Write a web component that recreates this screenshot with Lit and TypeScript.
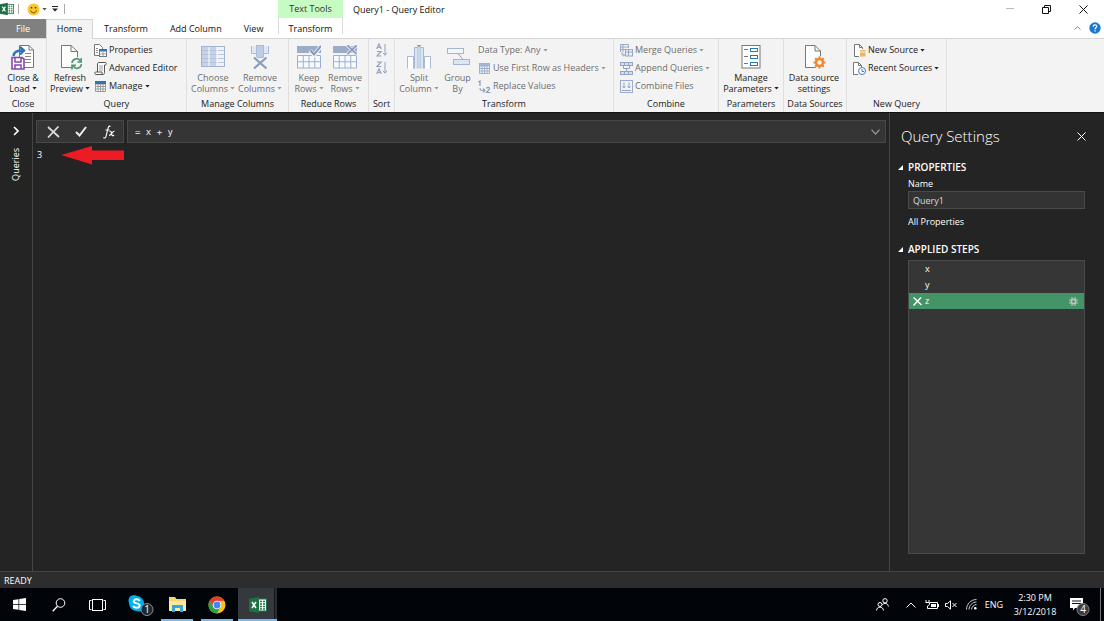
import { LitElement, html, svg, css, TemplateResult } from "lit";
import { customElement, state } from "lit/decorators.js";
import { classMap } from "lit/directives/class-map.js";

const icon = (w: number, h: number, body: unknown) =>
  html`<svg class="ico" width=${w} height=${h} viewBox="0 0 ${w} ${h}" fill="none" aria-hidden="true">${body}</svg>`;

const caret = html`<svg class="caret" width="5" height="3" viewBox="0 0 5 3" aria-hidden="true"><path d="M.3 0H4.700L2.500 2.600Z" fill="currentColor"/></svg>`;

const excel = (w: number, h: number) => html`<svg width=${w} height=${h} viewBox="0 0 18 16" aria-hidden="true">
  <rect x="9" y="2" width="8.500" height="12" fill="#fff" stroke="#1e7145" stroke-width="1"/>
  <path d="M11 4.500h2M14 4.500h2M11 7h2M14 7h2M11 9.500h2M14 9.500h2M11 12h2M14 12h2" stroke="#1e7145" stroke-width="1.300"/>
  <path d="M0 1.800L10 0V16L0 14.200Z" fill="#1e7145"/>
  <path d="M3 5L7 11M7 5L3 11" stroke="#fff" stroke-width="1.500"/></svg>`;

const grid = (x: number, y: number, w: number, h: number, cols: number, rows: number, stroke: string) => {
  let d = `M${x} ${y}h${w}v${h}h${-w}z`;
  for (let i = 1; i < cols; i++) d += `M${x + (w * i) / cols} ${y}v${h}`;
  for (let i = 1; i < rows; i++) d += `M${x} ${y + (h * i) / rows}h${w}`;
  return svg`<path d=${d} stroke=${stroke}/>`;
};

const I = {
  closeLoad: icon(24, 26, svg`
    <path d="M8.500 1.500H18L22.500 6V23.500H8.500Z" fill="#fff" stroke="#777"/><path d="M18 1.500V6H22.500" stroke="#777"/>
    <path d="M14 9.500h6M14 12.500h6M14 15.500h6M14 18.500h6" stroke="#888"/>
    <path d="M2.500 12C3 7.500 6 6.500 12 6.500M9 3L13 6.500L9 10.500" stroke="#2f74b5" stroke-width="2.400"/>
    <path d="M1 13.500H11L13 15V25H1Z" fill="#fff" stroke="#8646ad" stroke-width="1.600"/>
    <path d="M4 14v4h6v-4M4 25v-4h6v4" stroke="#8646ad" stroke-width="1.500"/>`),
  refresh: icon(24, 26, svg`
    <path d="M3.500 1.500H13L19.500 7.500V23.500H3.500Z" fill="#fff" stroke="#777"/><path d="M13 1.500V7.500H19.500" stroke="#777"/>
    <circle cx="19" cy="19.500" r="6.500" fill="#f3f3f3"/>
    <path d="M14 19C14.500 14.500 20 13 22.500 17M23.300 14V18H19.500" stroke="#4f9c77" stroke-width="1.700"/>
    <path d="M23.500 20C23 25 17.500 25.500 15 22M14 25.500V21.300H18" stroke="#4f9c77" stroke-width="1.700"/>`),
  choose: icon(24, 24, svg`
    <rect x="1" y="1" width="22" height="21" fill="#eef3fa"/><rect x="1" y="1" width="15" height="21" fill="#c5d3e8"/>
    <path d="M1 5.500H23M1 9.500H23M1 13.500H23M1 17.500H23" stroke="#aebdd6" stroke-width=".8"/>
    <path d="M8 1v21M16 1v21" stroke="#fff"/><rect x="0.500" y="1.500" width="23" height="20" stroke="#a3b3ce"/>`),
  removeCols: icon(24, 26, svg`
    <path d="M3.500 2V9.500H8M20.500 2V9.500H16" stroke="#a9bbd6"/><rect x="4" y="2" width="4" height="7" fill="#dfe8f4"/><rect x="16" y="2" width="4" height="7" fill="#dfe8f4"/>
    <rect x="8.500" y="1.500" width="7" height="12" fill="#bdcde4" stroke="#a9bbd6"/>
    <path d="M6 13.500L18.500 24.500M18.500 13.500L6 24.500" stroke="#f3f3f3" stroke-width="4"/>
    <path d="M6 13.500L18.500 24.500M18.500 13.500L6 24.500" stroke="#8a9bbb" stroke-width="2.200"/>`),
  keep: icon(24, 24, svg`
    <rect y="1" width="24" height="7" fill="#9bacc9"/><rect x="1" y="11" width="22" height="12" fill="#f7faff"/>${grid(0.500, 10.500, 23, 12.500, 4, 2, "#9bb0d0")}
    <path d="M13 5.500L17 10L24 1" stroke="#f3f3f3" stroke-width="4"/><path d="M13.500 5.500L17 9.500L24 1" stroke="#8798b8" stroke-width="2"/>`),
  removeRows: icon(24, 24, svg`
    <rect y="1" width="24" height="7" fill="#9bacc9"/><rect x="1" y="11" width="22" height="12" fill="#f7faff"/>${grid(0.500, 10.500, 23, 12.500, 4, 2, "#9bb0d0")}
    <path d="M14 0L24 9.500M24 0L14 9.500" stroke="#dfe5ef" stroke-width="3.500"/><path d="M14.500 .5L23.500 9M23.500 .5L14.500 9" stroke="#8798b8" stroke-width="1.700"/>`),
  az: icon(12, 14, svg`<path d="M.7 6L3 1L5.300 6M1.500 4.500H4.500M1 8.500H5L1 13H5.200" stroke="#93a3c0" stroke-width="1.200"/><path d="M9 1V12M7 9.800L9 12.300L11 9.800" stroke="#93a3c0"/>`),
  za: icon(12, 14, svg`<path d="M.7 13L3 8L5.300 13M1.500 11.500H4.500M1 1H5L1 5.500H5.200" stroke="#93a3c0" stroke-width="1.200"/><path d="M9 1V12M7 9.800L9 12.300L11 9.800" stroke="#93a3c0"/>`),
  split: icon(24, 26, svg`
    <path d="M.5 24.500V12.500H6.500V24.500M17.500 24.500V12.500H23.500V24.500" fill="#fff" stroke="#a6b9d6"/>
    <path d="M7.500 24.500V3.500H11V24.500M13 24.500V3.500H16.500V24.500" fill="#d9e4f3" stroke="#a6b9d6"/><path d="M9.500 1H14.500L12 3.500Z" fill="#8a9bbb"/>`),
  group: icon(24, 26, svg`
    <rect x="1.500" y="4.500" width="16" height="5" fill="#f4f8fd" stroke="#a3b5d1"/><rect x="7.500" y="15.500" width="16" height="5" fill="#dbe6f5" stroke="#a3b5d1"/><path d="M12 9.500L17 15.500" stroke="#93a3c0"/>`),
  props: icon(13, 13, svg`
    <path d="M.5 .5H5.500L8.500 3.500V11.500H.5Z" fill="#fff" stroke="#777"/><path d="M2 4.500h2M2 6.500h2M2 8.500h2" stroke="#888"/>
    <rect x="5.500" y="5.500" width="7" height="7" fill="#fff" stroke="#777"/><rect x="5" y="5" width="8" height="2.500" fill="#2e75b6"/><path d="M6 10h6.500M9 7.500v5" stroke="#888" stroke-width=".8"/>`),
  editor: icon(13, 13, svg`
    <path d="M3.500 10V2C3.500 1 4 .5 5 .5H11.500C12.500 .5 12.500 3 11.500 3H10.500V10.500C10.500 12 10 12.500 9 12.500H2C.5 12.500 .5 10 1.500 10H8C8 11.500 8.500 12.500 9 12.500" fill="#fff" stroke="#555"/><path d="M5 4h4M5 6h4M5 8h4" stroke="#888" stroke-width=".8"/>`),
  manage: icon(13, 13, svg`<rect x="1" y="2" width="11" height="9" fill="#fff"/>${grid(1.500, 1.500, 10, 10, 4, 4, "#999")}<rect x="1" y="1" width="11" height="3" fill="#2e75b6"/>`),
  header: icon(13, 13, svg`<rect x="1" y="1" width="11" height="3" fill="#a9b9d4"/>${grid(1.500, 1.500, 10, 10, 4, 4, "#a0b1cd")}`),
  replace: icon(13, 13, svg`<path d="M.5 2L2 1V6M8.500 8.500C9 7 12 7 11.500 9L8.500 12.500H12.500" stroke="#8a9bbb" stroke-width="1.200"/><path d="M2 8C2 10.500 3 10.500 7 10.500M5 8.500L7 10.500L5 12.500" stroke="#93a3c0" stroke-width="1.200"/>`),
  merge: icon(13, 13, svg`<path d="M.5 8V.5H8.500V4M.5 3H8M3 .5V8M.5 5.500H5" stroke="#98a9c5"/><rect x="5.500" y="5.500" width="7" height="6.500" fill="#e7eef8" stroke="#98a9c5"/><path d="M5.500 8H12.500M8.500 5.500V12M2 8V11H4.500M3 9.500L4.500 11L3 12.500" stroke="#98a9c5"/>`),
  append: icon(13, 13, svg`<rect x=".5" y=".5" width="12" height="3" fill="#d3dfef" stroke="#93a5c3"/><path d="M4.500 .5V3.500M8.500 .5V3.500M3.500 3.500V6.500H9.500V3.500M6.500 6V9.500" stroke="#93a5c3"/><rect x=".5" y="9.500" width="12" height="3" fill="#d3dfef" stroke="#93a5c3"/><path d="M4.500 9V12.500M8.500 9V12.500" stroke="#93a5c3"/>`),
  combine: icon(13, 13, svg`<rect x=".5" y=".5" width="12" height="12" fill="#eef3fa" stroke="#9bacc9"/><path d="M4 2.500V8M2.500 6.500L4 8L5.500 6.500M9 2.500V8M7.500 6.500L9 8L10.500 6.500M2 10.500H11" stroke="#93a3c0"/>`),
  params: icon(20, 24, svg`<rect x="1" y=".5" width="18" height="22.500" fill="#fff" stroke="#777"/><path d="M3 4.500h4M3 11.500h4M3 18.500h4" stroke="#777"/><rect x="9.500" y="3.500" width="7" height="3" stroke="#2e75b6"/><rect x="9.500" y="10.500" width="7" height="3" stroke="#2e75b6"/><rect x="9.500" y="17.500" width="7" height="3" stroke="#2e75b6"/>`),
  source: icon(24, 26, svg`
    <path d="M3.500 1.500H13L18.500 7V23.500H3.500Z" fill="#fff" stroke="#777"/><path d="M13 1.500V7H18.500" stroke="#777"/>
    <circle cx="17.500" cy="18.500" r="6.500" fill="#f3f3f3"/><circle cx="17.500" cy="18.500" r="3.500" stroke="#ed8733" stroke-width="2.400"/>
    <path d="M17.500 12.500v3M17.500 21.500v3M11.500 18.500h3M20.500 18.500h3M13.200 14.200l2 2M19.800 20.800l2 2M13.200 22.800l2-2M19.800 16.200l2-2" stroke="#ed8733" stroke-width="2"/>`),
  newSource: icon(13, 13, svg`<path d="M6 12.500H1.500V.5H6.500L9.500 3.500V5" fill="#fff" stroke="#777"/><path d="M6.500 .5V3.500H9.500" stroke="#777"/><path d="M7 6h5.500v6.500H7z" fill="#ecb765"/><path d="M7 8H12.500" stroke="#fff" stroke-width=".8"/>`),
  recent: icon(13, 13, svg`<path d="M5 12.500H.5V.5H5.500L8.500 3.500V5" fill="#fff" stroke="#777"/><path d="M5.500 .5V3.500H8.500" stroke="#777"/><circle cx="9" cy="9" r="3.500" fill="#fff" stroke="#3f7fc1"/><path d="M9 7V9.500H11" stroke="#3f7fc1"/>`),
};

interface Cmd { label: string; icon?: TemplateResult; menu?: boolean; off?: boolean; name?: string; }
interface Group { name: string; key: string; big: Cmd[]; small: Cmd[]; }

const GROUPS: Group[] = [
  { name: "Close", key: "g-close", big: [{ label: "Close &\nLoad", icon: I.closeLoad, menu: true }], small: [] },
  { name: "Query", key: "g-query", big: [{ label: "Refresh\nPreview", icon: I.refresh, menu: true }],
    small: [{ label: "Properties", icon: I.props }, { label: "Advanced Editor", icon: I.editor }, { label: "Manage", icon: I.manage, menu: true }] },
  { name: "Manage Columns", key: "g-cols", big: [{ label: "Choose\nColumns", icon: I.choose, menu: true, off: true }, { label: "Remove\nColumns", icon: I.removeCols, menu: true, off: true }], small: [] },
  { name: "Reduce Rows", key: "g-rows", big: [{ label: "Keep\nRows", icon: I.keep, menu: true, off: true }, { label: "Remove\nRows", icon: I.removeRows, menu: true, off: true }], small: [] },
  { name: "Sort", key: "g-sort", big: [], small: [{ label: "", name: "Sort Ascending", icon: I.az, off: true }, { label: "", name: "Sort Descending", icon: I.za, off: true }] },
  { name: "Transform", key: "g-transform", big: [{ label: "Split\nColumn", icon: I.split, menu: true, off: true }, { label: "Group\nBy", icon: I.group, off: true }],
    small: [{ label: "Data Type: Any", menu: true, off: true }, { label: "Use First Row as Headers", icon: I.header, menu: true, off: true }, { label: "Replace Values", icon: I.replace, off: true }] },
  { name: "Combine", key: "g-combine", big: [], small: [{ label: "Merge Queries", icon: I.merge, menu: true, off: true }, { label: "Append Queries", icon: I.append, menu: true, off: true }, { label: "Combine Files", icon: I.combine, off: true }] },
  { name: "Parameters", key: "g-params", big: [{ label: "Manage\nParameters", icon: I.params, menu: true }], small: [] },
  { name: "Data Sources", key: "g-sources", big: [{ label: "Data source\nsettings", icon: I.source }], small: [] },
  { name: "New Query", key: "g-new", big: [], small: [{ label: "New Source", icon: I.newSource, menu: true }, { label: "Recent Sources", icon: I.recent, menu: true }] },
];

const base = css`
  * { box-sizing: border-box; }
  button, input { font: inherit; color: inherit; background: none; border: 0; padding: 0; margin: 0; border-radius: 0; }
  button { display: flex; align-items: center; justify-content: center; }
  svg { display: block; flex: none; }
`;

@customElement("editor-ribbon")
export class EditorRibbon extends LitElement {
  static styles = [base, css`
    :host { display: flex; background: #f3f3f3; border-top: 1px solid #d5d5d5; height: 74px; color: #222; }
    .group { display: flex; flex-direction: column; border-right: 1px solid #dfdfdf; padding-top: 2px; flex: none; }
    .tools { display: flex; height: 54px; }
    .name { text-align: center; line-height: 18px; height: 17px; white-space: nowrap; }
    .big { flex-direction: column; justify-content: flex-start; padding-top: 3px; gap: 2px; width: 46px; line-height: 11px; white-space: nowrap; }
    .big .pic { height: 26px; display: flex; align-items: center; }
    .line { display: flex; align-items: center; justify-content: center; gap: 2px; }
    .list { display: flex; flex-direction: column; }
    .small { height: 18px; gap: 2px; justify-content: flex-start; white-space: nowrap; }
    .off { color: #6e6e6e; }
    .off .caret { color: #999; }
    .g-close { width: 47px; }
    .g-query { width: 140px; }
    .g-query .tools { gap: 1px; }
    .g-cols { width: 102px; }
    .g-cols .tools { padding-left: 3px; gap: 1px; }
    .g-rows { width: 80px; }
    .g-rows .tools { padding-left: 2px; }
    .g-rows .big { width: 36px; }
    .g-sort { width: 26px; }
    .g-sort .tools { justify-content: center; }
    .g-transform { width: 219px; }
    .g-transform .tools { padding-left: 1px; }
    .g-transform .big + .big { width: 31px; }
    .g-transform .list { padding-left: 5px; }
    .g-combine { width: 105px; }
    .g-combine .tools, .g-new .tools { padding-left: 6px; }
    .g-params { width: 65px; }
    .g-params .tools { justify-content: center; }
    .g-sources { width: 63px; }
    .g-sources .big { width: 60px; }
    .g-new { width: 100px; }
  `];
  private big(c: Cmd) {
    const [a, b] = c.label.split("\n");
    return html`<button class=${classMap({ big: true, off: !!c.off })}><span class="pic">${c.icon}</span>
      <span><span class="line">${a}</span><span class="line">${b}${c.menu ? caret : ""}</span></span></button>`;
  }
  private small(c: Cmd) {
    return html`<button class=${classMap({ small: true, off: !!c.off })} aria-label=${c.name ?? c.label}>${c.icon}${c.label ? html`<span>${c.label}</span>` : ""}${c.menu ? caret : ""}</button>`;
  }
  render() {
    return GROUPS.map((g) => html`<section class="group ${g.key}">
      <div class="tools">${g.big.map((c) => this.big(c))}${g.small.length ? html`<div class="list">${g.small.map((c) => this.small(c))}</div>` : ""}</div>
      <div class="name">${g.name}</div></section>`);
  }
}

@customElement("query-settings")
export class QuerySettings extends LitElement {
  @state() private selected = "z";
  static styles = [base, css`
    :host { display: flex; flex-direction: column; width: 215px; border-left: 1px solid #464646; padding: 10px 19px 17px 8px; color: #fff; flex: none; }
    header { display: flex; align-items: center; justify-content: space-between; height: 26px; padding-left: 3px; }
    h2 { margin: 0; font-size: 15px; font-weight: 300; line-height: 26px; }
    .close { width: 16px; height: 16px; margin-right: -4px; }
    h3 { margin: 0; display: flex; align-items: center; gap: 5px; font-size: 10px; font-weight: 600; line-height: 12px; }
    .properties { margin-top: 12px; }
    .body { padding-left: 10px; display: flex; flex-direction: column; }
    label { line-height: 12px; margin: 5px 0 1px; }
    input { height: 18px; border: 1px solid #4a4a4a; background: #333; padding: 0 4px; color: #ddd; width: 100%; }
    a { color: inherit; text-decoration: none; line-height: 12px; margin-top: 7px; }
    .applied { margin-top: 15px; }
    ul { list-style: none; margin: 5px 0 0 10px; padding: 0; flex: 1; border: 1px solid #4a4a4a; background: #363636; }
    li { display: flex; align-items: center; height: 16px; padding: 0 6px 0 4px; }
    li .mark { width: 9px; height: 9px; }
    li .step { flex: 1; justify-content: flex-start; padding-left: 3px; height: 16px; }
    .on { background: #439467; }
  `];
  render() {
    const tri = html`<svg width="5" height="5" viewBox="0 0 5 5" aria-hidden="true"><path d="M5 0V5H0Z" fill="#fff"/></svg>`;
    return html`
      <header><h2>Query Settings</h2><button class="close" aria-label="Close pane"><svg width="9" height="9" viewBox="0 0 9 9"><path d="M.5 .5L8.500 8.500M8.500 .5L.5 8.500" stroke="#fff"/></svg></button></header>
      <h3 class="properties">${tri}PROPERTIES</h3>
      <div class="body"><label for="name">Name</label><input id="name" .value=${"Query1"} /><a href="#all">All Properties</a></div>
      <h3 class="applied">${tri}APPLIED STEPS</h3>
      <ul>${["x", "y", "z"].map((s) => {
        const on = s === this.selected;
        return html`<li class=${classMap({ on })}>
          ${on ? html`<button class="mark" aria-label="Delete step"><svg width="9" height="9" viewBox="0 0 9 9"><path d="M.5 .5L8.500 8M8 .5L.5 8.500" stroke="#fff" stroke-width="1.400"/></svg></button>` : html`<span class="mark"></span>`}
          <button class="step" @click=${() => (this.selected = s)}>${s}</button>
          ${on ? html`<button aria-label="Step settings"><svg width="9" height="9" viewBox="0 0 9 9" fill="none" stroke="#bcc4bf"><circle cx="4.500" cy="4.500" r="2.200" stroke-width="1.700"/><path d="M3 0V3M6 0V3M3 6V9M6 6V9M0 3H3M6 3H9M0 6H3M6 6H9" stroke-width="1.100"/></svg></button>` : ""}
        </li>`;
      })}</ul>`;
  }
}

@customElement("task-bar")
export class TaskBar extends LitElement {
  static styles = [base, css`
    :host { display: flex; align-items: stretch; height: 33px; background: #010409; color: #fff; font-size: 9px; }
    .app { width: 39px; position: relative; }
    .wide { width: 40px; }
    .open::after { content: ""; position: absolute; left: 4px; right: 4px; bottom: 0; height: 2px; background: #76b9ed; }
    .active { background: linear-gradient(90deg, #35383d 36px, #14171b 36px, #14171b 37px, #292c30 37px); margin-left: 1px; }
    .active::after { left: 0; right: 0; }
    .tray { margin-left: auto; display: flex; align-items: center; }
    .tray button { height: 33px; }
    .people { width: 28px; }
    .up { width: 22px; margin-left: 4px; }
    .t { width: 19px; }
    .wifi { width: 22px; }
    .lang { width: 24px; }
    .clock { width: 58px; flex-direction: column; line-height: 14px; }
    .notes { width: 29px; }
    .edge { width: 4px; margin-left: 7px; border-left: 1px solid #777; }
  `];
  render() {
    return html`
      <button class="app" aria-label="Start"><svg width="13" height="13" viewBox="0 0 13 13" fill="#fff"><path d="M0 2L5.500 1.200V6H0ZM6.200 1.100L13 0V6H6.200ZM0 6.800H5.500V11.800L0 11ZM6.200 6.800H13V13L6.200 11.900Z"/></svg></button>
      <button class="app" aria-label="Search"><svg width="14" height="14" viewBox="0 0 14 14" fill="none" stroke="#fff"><circle cx="8.500" cy="5" r="4.300"/><path d="M5.500 8.200L.7 13.300" stroke-width="1.300"/></svg></button>
      <button class="app" aria-label="Task View"><svg width="17" height="12" viewBox="0 0 17 12" fill="none" stroke="#fff"><rect x="3.500" y=".5" width="10" height="11"/><path d="M2.500 1.500H.5V10.500H2.500M14.500 1.500H16.500V10.500H14.500"/></svg></button>
      <button class="app wide" aria-label="Skype, 1 notification"><svg width="34" height="22" viewBox="-7 0 34 22">
        <circle cx="7" cy="6.500" r="5.500" fill="#00aff0"/><circle cx="12" cy="12" r="5.500" fill="#00aff0"/><circle cx="9.500" cy="9.500" r="7.500" fill="#00aff0"/>
        <path d="M12.700 7C11.500 4.500 6.500 4.800 6.700 7.500C6.900 10 12.700 8.800 12.700 11.600C12.700 14.500 7 14.300 6.300 11.800" fill="none" stroke="#fff" stroke-width="1.900"/>
        <circle cx="20" cy="15.500" r="6" fill="#20272d" stroke="#8b8f93"/><text x="20" y="19" text-anchor="middle" font-size="10" fill="#fff">1</text></svg></button>
      <button class="app wide open" aria-label="File Explorer"><svg width="17" height="15" viewBox="0 0 17 15"><path d="M0 0H6L7.500 2H17V14H0Z" fill="#f7d774"/><path d="M0 4H17V14H0Z" fill="#ffe9a0"/><path d="M3 15V8H14V15H11V11H6V15Z" fill="#35a6de"/></svg></button>
      <button class="app wide open" aria-label="Chrome"><svg width="18" height="18" viewBox="0 0 18 18"><circle cx="9" cy="9" r="8.500" fill="#fbc116"/><path d="M1.640 4.750A8.500 8.500 0 0 1 16.360 4.750L9 5A4 4 0 0 0 5.500 11Z" fill="#e33b2e"/><path d="M1.640 4.750A8.500 8.500 0 0 0 9 17.500L12.500 11A4 4 0 0 1 5.500 11Z" fill="#2ba24c"/><circle cx="9" cy="9" r="4.300" fill="#fff"/><circle cx="9" cy="9" r="3.400" fill="#4285f4"/></svg></button>
      <button class="app open active" aria-label="Excel">${excel(18, 16)}</button>
      <div class="tray">
        <button class="people" aria-label="People"><svg width="13" height="13" viewBox="0 0 13 13" fill="none" stroke="#fff"><circle cx="9" cy="2.800" r="2.200"/><path d="M6.500 6.500C8 4.800 12.300 5 12.300 8.500"/><circle cx="4" cy="6.500" r="2"/><path d="M.6 12.500C.6 8 7.400 8 7.400 12.500"/></svg></button>
        <button class="up" aria-label="Show hidden icons"><svg width="10" height="6" viewBox="0 0 10 6" fill="none" stroke="#fff"><path d="M.5 5.500L5 1L9.500 5.500"/></svg></button>
        <button class="t" aria-label="Battery"><svg width="14" height="10" viewBox="0 0 14 10" fill="none" stroke="#fff"><path d="M5 2.500H12.500V8.500H4"/><rect x="6" y="4" width="5" height="3" fill="#fff" stroke="none"/><path d="M13.500 4V7M1 0V2M4 0V2M.5 2.500H4.500V4.500L2.500 6V8.500H5"/></svg></button>
        <button class="t" aria-label="Volume muted"><svg width="12" height="10" viewBox="0 0 12 10" fill="none" stroke="#fff"><path d="M.5 3.500H2.500L5.500 .8V9.200L2.500 6.500H.5ZM7.500 3L11.500 7M11.500 3L7.500 7"/></svg></button>
        <button class="wifi" aria-label="Network"><svg width="11" height="11" viewBox="0 0 11 11" fill="none" stroke="#c9c9c9"><path d="M.5 10.500C.5 5 5 .5 10.500 .5M3 10.500C3 6.500 6.500 3 10.500 3M5.500 10.500C5.500 8 8 5.500 10.500 5.500"/><circle cx="9.300" cy="9.300" r="1.300" fill="#fff" stroke="none"/></svg></button>
        <button class="lang">ENG</button>
        <button class="clock"><span>2:30 PM</span><span>3/12/2018</span></button>
        <button class="notes" aria-label="4 notifications"><svg width="22" height="22" viewBox="0 0 22 22"><path d="M2 4H15V14H7L5 16.500V14H2Z" fill="#fff"/><path d="M4 7H13M4 9.500H13" stroke="#111"/><circle cx="15" cy="15.500" r="6" fill="#383a3d" stroke="#808285"/><text x="15" y="19" text-anchor="middle" font-size="10" fill="#fff">4</text></svg></button>
        <button class="edge" aria-label="Show desktop"></button>
      </div>`;
  }
}

@customElement("app-root")
export class AppRoot extends LitElement {
  @state() private tab = "Home";
  static styles = [base, css`
    :host { display: flex; flex-direction: column; min-height: 100vh; background: #242424; font: 9px/12px "Open Sans", "Noto Sans", sans-serif; color: #222; }
    .top { display: grid; grid-template: 18px 20px / 278px 65px 1fr; background: #fff; color: #111; }
    .quick { display: flex; align-items: center; }
    .bar { width: 1px; height: 10px; background: #aaa; }
    .quick .first { margin: 0 8px 0 4px; }
    .face { gap: 2px; margin-right: 5px; color: #555; }
    .more { margin-right: 6px; }
    .ctx { background: #c6fbc3; display: flex; align-items: center; justify-content: center; color: #333; }
    .caption { display: flex; align-items: center; justify-content: space-between; padding-left: 10px; }
    h1 { margin: 0; font-size: 9px; font-weight: 400; line-height: 14px; padding-top: 1px; }
    .win { display: flex; }
    .win button { width: 37px; height: 18px; }
    .win button:last-child { margin-right: 2px; }
    .tabs { display: flex; }
    .tabs button { padding: 1px 11px 0; white-space: nowrap; }
    .tabs .file { width: 46px; background: #808080; color: #fff; margin-top: 1px; padding: 0; }
    .tabs .current { width: 47px; padding: 0 0 2px; background: #f3f3f3; border: 1px solid #d5d5d5; border-bottom: 0; margin: 1px 0 -1px; position: relative; }
    .ctxtab { border: solid #dcdcdc; border-width: 0 1px; margin-bottom: 4px; padding-top: 5px; }
    .help { display: flex; justify-content: flex-end; align-items: center; gap: 8px; padding-right: 3px; }
    main { flex: 1; display: flex; border-top: 1px solid #111; }
    .rail { width: 33px; border-right: 1px solid #464646; display: flex; flex-direction: column; align-items: center; padding-top: 13px; gap: 12px; color: #fff; flex: none; }
    .rail .label { writing-mode: vertical-rl; transform: rotate(180deg); }
    .work { flex: 1; min-width: 0; display: flex; flex-direction: column; padding: 7px 3px 0; }
    .formula { display: flex; gap: 3px; height: 23px; }
    .box { border: 1px solid #484848; background: #353535; display: flex; align-items: center; }
    .acts { width: 88px; padding-left: 2px; }
    .acts button { flex: 1; height: 21px; }
    .entry { flex: 1; }
    .entry input { flex: 1; min-width: 0; height: 21px; padding: 0 7px; color: #eee; font-family: "DejaVu Sans Mono", monospace; }
    .entry button { width: 20px; height: 21px; }
    .result { display: flex; align-items: center; gap: 18px; color: #fff; padding: 1px 0 0 1px; }
    .status { height: 17px; border-top: 1px solid #444; background: #2d2d2d; color: #fff; padding-left: 4px; line-height: 17px; }
  `];
  render() {
    return html`
      <div class="top">
        <div class="quick">${excel(14, 14)}<span class="bar first"></span>
          <button class="face" aria-label="Send a smile"><svg width="13" height="13" viewBox="0 0 13 13"><circle cx="6.500" cy="6.500" r="6" fill="#fcc62c"/><path d="M3.500 7.500C4.500 10.500 8.500 10.500 9.500 7.500" fill="none" stroke="#5a4310"/><circle cx="4.500" cy="4.700" r=".9" fill="#5a4310"/><circle cx="8.500" cy="4.700" r=".9" fill="#5a4310"/></svg>${caret}</button>
          <button class="more" aria-label="Customize toolbar"><svg width="6" height="6" viewBox="0 0 6 6"><path d="M0 .5H6" stroke="#222"/><path d="M0 2.500H6L3 5.500Z" fill="#222"/></svg></button><span class="bar"></span>
        </div>
        <div class="ctx">Text Tools</div>
        <div class="caption"><h1>Query1 - Query Editor</h1>
          <div class="win">
            <button aria-label="Minimize"><svg width="8" height="8" viewBox="0 0 8 8"><path d="M0 3.500H8" stroke="#bbb"/></svg></button>
            <button aria-label="Restore"><svg width="9" height="9" viewBox="0 0 9 9" fill="none" stroke="#111"><path d="M.5 2.500H6.500V8.500H.5ZM2.500 2.500V.5H8.500V6.500H6.500"/></svg></button>
            <button aria-label="Close"><svg width="9" height="9" viewBox="0 0 9 9" stroke="#111"><path d="M.5 .5L8.500 8.500M8.500 .5L.5 8.500"/></svg></button>
          </div></div>
        <nav class="tabs"><button class="file">File</button>
          ${["Home", "Transform", "Add Column", "View"].map((t) => html`<button class=${classMap({ current: t === this.tab })} @click=${() => (this.tab = t)}>${t}</button>`)}
        </nav>
        <button class="ctxtab">Transform</button>
        <div class="help"><button aria-label="Collapse ribbon"><svg width="7" height="4" viewBox="0 0 7 4" fill="none" stroke="#888"><path d="M.5 3.500L3.500 .7L6.500 3.500"/></svg></button>
          <button aria-label="Help"><svg width="12" height="12" viewBox="0 0 12 12"><circle cx="6" cy="6" r="5.700" fill="#1b78d0"/><path d="M4.200 4.600C4.300 2.300 7.800 2.500 7.700 4.500C7.600 5.800 6 5.800 6 7.300M6 8.300V9.600" fill="none" stroke="#fff" stroke-width="1.300"/></svg></button></div>
      </div>
      <editor-ribbon></editor-ribbon>
      <main>
        <aside class="rail"><button aria-label="Expand queries"><svg width="6" height="10" viewBox="0 0 6 10" fill="none" stroke="#fff" stroke-width="1.600"><path d="M1 1L5 5L1 9"/></svg></button><span class="label">Queries</span></aside>
        <div class="work">
          <div class="formula">
            <div class="box acts">
              <button aria-label="Cancel"><svg width="13" height="12" viewBox="0 0 13 12" fill="none" stroke="#ddd" stroke-width="1.700"><path d="M1 1L12 11M11.500 .5L1 11.500"/></svg></button>
              <button aria-label="Accept"><svg width="12" height="11" viewBox="0 0 12 11" fill="none" stroke="#eee" stroke-width="2"><path d="M1 6L4.500 9.500L11 1"/></svg></button>
              <button aria-label="Insert function"><svg width="12" height="14" viewBox="0 0 12 14" fill="none" stroke="#fff" stroke-width="1.100"><path d="M7.500 1.500C5.500 0 5 3 4.500 5.500L3 11.500C2.700 13 1.500 13.500 .5 12.500M2.500 5H6.500M6.500 6.500C8 5.500 8.300 7 8.500 8.500C8.700 10.500 9.500 11.500 11 10M11.500 6.300C9.500 5.500 8.500 10.500 6 10.500"/></svg></button>
            </div>
            <div class="box entry"><input aria-label="Formula" .value=${"= x + y"} /><button aria-label="Expand formula bar"><svg width="9" height="6" viewBox="0 0 9 6" fill="none" stroke="#999" stroke-width="1.200"><path d="M.5 .7L4.500 5L8.500 .7"/></svg></button></div>
          </div>
          <div class="result"><span>3</span><svg width="64" height="22" viewBox="0 0 64 22" aria-hidden="true"><path d="M1 11L32 2V6.500H64V16H32V20.500Z" fill="#ed1c24"/></svg></div>
        </div>
        <query-settings></query-settings>
      </main>
      <div class="status">READY</div>
      <task-bar></task-bar>`;
  }
}
